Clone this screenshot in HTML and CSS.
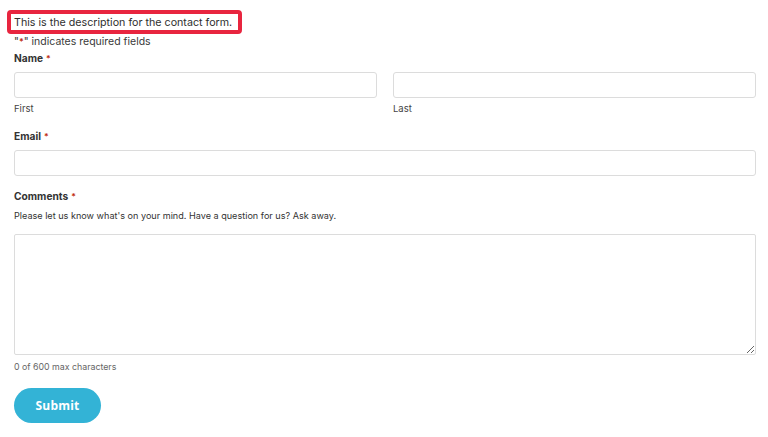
FILE: index.html
```html
<!DOCTYPE html>
<html lang="en">
<head>
<meta charset="utf-8">
<title>Contact form</title>
<link rel="stylesheet" href="styles.css">
</head>
<body>
<form class="form">
  <div class="form-head">
    <p class="form-desc"><span class="highlight">This is the description for the contact form.</span></p>
    <p class="required-note">"<span class="req">*</span>" indicates required fields</p>
  </div>

  <div class="field">
    <div class="label">Name<span class="req">*</span></div>
    <div class="name-row">
      <div class="name-col">
        <input class="input" type="text">
        <div class="sublabel">First</div>
      </div>
      <div class="name-col">
        <input class="input" type="text">
        <div class="sublabel">Last</div>
      </div>
    </div>
  </div>

  <div class="field field-email">
    <div class="label">Email<span class="req">*</span></div>
    <input class="input input-full" type="email">
  </div>

  <div class="field field-comments">
    <div class="label">Comments<span class="req">*</span></div>
    <div class="field-desc">Please let us know what's on your mind. Have a question for us? Ask away.</div>
    <textarea class="textarea"></textarea>
    <div class="counter">0 of 600 max characters</div>
  </div>

  <button class="submit" type="button">Submit</button>
</form>
</body>
</html>
```

FILE: styles.css
```css
html, body {
  margin: 0;
  padding: 0;
  background: #ffffff;
}

body {
  font-family: Inter, "Liberation Sans", Arial, sans-serif;
  color: #333333;
}

.form {
  padding: 15px 12px 0 14px;
}

.form-head p {
  margin: 0;
}

.form-desc {
  font-size: 10.7px;
  line-height: 16px;
  color: #2f2f2f;
}

.highlight {
  position: relative;
}

.highlight::after {
  content: "";
  position: absolute;
  left: -7px;
  right: -10px;
  top: -6px;
  bottom: -5px;
  border: 4px solid #e8253f;
  border-radius: 4px;
}

.required-note {
  margin-top: 4px !important;
  font-size: 10.5px;
  line-height: 14px;
  color: #3a3a3a;
}

.required-note .req {
  margin: 0;
}

.req {
  color: #c02b0a;
  margin-left: 3px;
  font-weight: 600;
  font-size: 0.85em;
  line-height: 0;
}

.label {
  font-size: 10.2px;
  line-height: 14px;
  font-weight: 700;
  color: #333333;
}

.field {
  margin-top: 2px;
}

.name-row {
  display: flex;
  gap: 16px;
  margin-top: 7px;
}

.name-col {
  flex: 1;
}

.input {
  display: block;
  box-sizing: border-box;
  width: 100%;
  height: 26px;
  margin: 0;
  border: 1px solid #dcdcdc;
  border-radius: 3px;
  background: #ffffff;
  padding: 0 6px;
}

.sublabel {
  margin-top: 5px;
  font-size: 9.5px;
  line-height: 12px;
  color: #444444;
}

.field-email {
  margin-top: 14px;
}

.input-full {
  margin-top: 7px;
}

.field-comments {
  margin-top: 13px;
}

.field-desc {
  margin-top: 7px;
  font-size: 9.1px;
  line-height: 12px;
  color: #333333;
}

.textarea {
  display: block;
  box-sizing: border-box;
  width: 100%;
  height: 121px;
  margin: 12px 0 0;
  border: 1px solid #dcdcdc;
  border-radius: 2px;
  background: #ffffff;
  resize: vertical;
  font-family: inherit;
}

.counter {
  margin-top: 6px;
  font-size: 8.8px;
  line-height: 12px;
  color: #666666;
}

.submit {
  display: block;
  margin-top: 15px;
  width: 87px;
  height: 35px;
  border: none;
  border-radius: 18px;
  background: #33b3d6;
  color: #ffffff;
  font-family: "Open Sans", Inter, sans-serif;
  font-weight: 700;
  font-size: 12px;
  letter-spacing: 0.2px;
  padding: 0;
}
```
